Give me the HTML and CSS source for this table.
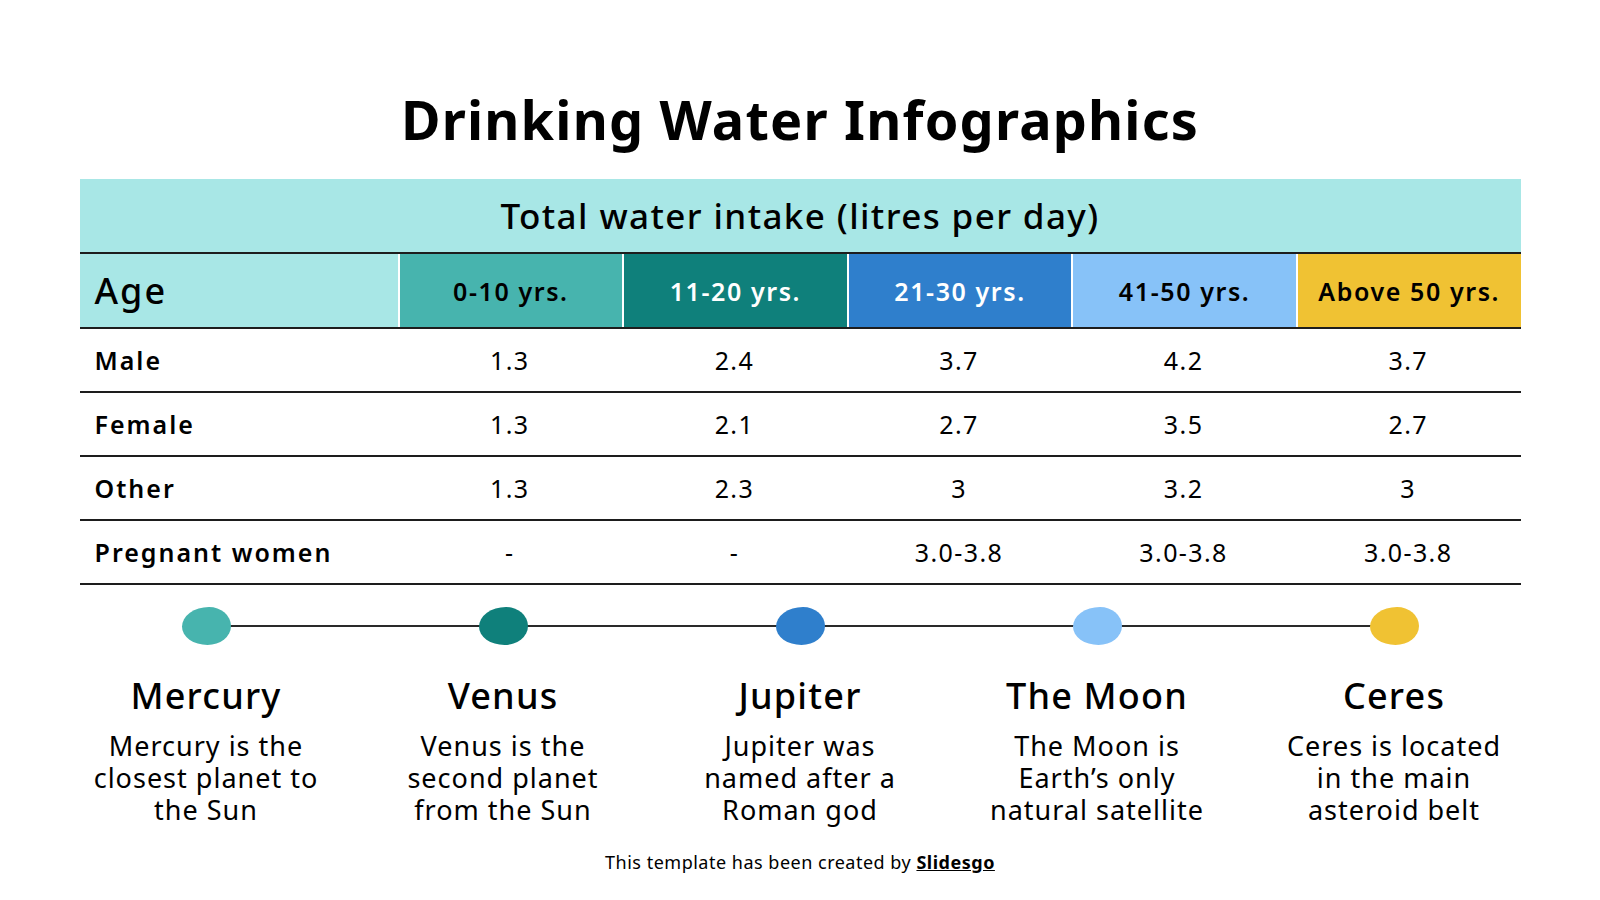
FILE: index.html
```html
<!DOCTYPE html>
<html lang="en">
<head>
<meta charset="utf-8">
<title>Drinking Water Infographics</title>
<link rel="stylesheet" href="styles.css">
</head>
<body>
<div class="slide">
  <h1 class="title">Drinking Water Infographics</h1>

  <div class="table">
    <div class="band">Total water intake (litres per day)</div>
    <div class="grid head">
      <div class="cell label age">Age</div>
      <div class="cell c1">0-10 yrs.</div>
      <div class="cell c2">11-20 yrs.</div>
      <div class="cell c3">21-30 yrs.</div>
      <div class="cell c4">41-50 yrs.</div>
      <div class="cell c5">Above 50 yrs.</div>
    </div>
    <div class="grid row">
      <div class="cell label">Male</div>
      <div class="cell">1.3</div><div class="cell">2.4</div><div class="cell">3.7</div><div class="cell">4.2</div><div class="cell">3.7</div>
    </div>
    <div class="grid row">
      <div class="cell label">Female</div>
      <div class="cell">1.3</div><div class="cell">2.1</div><div class="cell">2.7</div><div class="cell">3.5</div><div class="cell">2.7</div>
    </div>
    <div class="grid row">
      <div class="cell label">Other</div>
      <div class="cell">1.3</div><div class="cell">2.3</div><div class="cell">3</div><div class="cell">3.2</div><div class="cell">3</div>
    </div>
    <div class="grid row">
      <div class="cell label">Pregnant women</div>
      <div class="cell">-</div><div class="cell">-</div><div class="cell">3.0-3.8</div><div class="cell">3.0-3.8</div><div class="cell">3.0-3.8</div>
    </div>
  </div>

  <div class="timeline">
    <div class="item">
      <span class="dot d1"></span>
      <h2 class="name">Mercury</h2>
      <p class="desc">Mercury is the<br>closest planet to<br>the Sun</p>
    </div>
    <div class="item">
      <span class="dot d2"></span>
      <h2 class="name">Venus</h2>
      <p class="desc">Venus is the<br>second planet<br>from the Sun</p>
    </div>
    <div class="item">
      <span class="dot d3"></span>
      <h2 class="name">Jupiter</h2>
      <p class="desc">Jupiter was<br>named after a<br>Roman god</p>
    </div>
    <div class="item">
      <span class="dot d4"></span>
      <h2 class="name">The Moon</h2>
      <p class="desc">The Moon is<br>Earth’s only<br>natural satellite</p>
    </div>
    <div class="item">
      <span class="dot d5"></span>
      <h2 class="name">Ceres</h2>
      <p class="desc">Ceres is located<br>in the main<br>asteroid belt</p>
    </div>
  </div>

  <p class="credit">This template has been created by <a class="brand" href="#">Slidesgo</a></p>
</div>
</body>
</html>
```

FILE: styles.css
```css
* { box-sizing: border-box; }
html, body { margin: 0; padding: 0; background: #fff; }
body { font-family: "Noto Sans", "Open Sans", sans-serif; color: #000; }

.slide {
  width: 1600px;
  height: 900px;
  display: flex;
  flex-direction: column;
  align-items: center;
  overflow: hidden;
}

.title {
  margin: 86px 0 0;
  font-size: 54px;
  line-height: 66px;
  font-weight: 700;
  letter-spacing: 1.2px;
}

.table {
  width: 1441px;
  margin-top: 27px;
}

.band {
  height: 75px;
  background: #a8e7e6;
  display: flex;
  align-items: center;
  justify-content: center;
  font-size: 35px;
  font-weight: 500;
  letter-spacing: 1.4px;
  border-bottom: 2px solid #1d1d1d;
}

.grid {
  display: grid;
  grid-template-columns: 318px repeat(5, 1fr);
  border-bottom: 2px solid #1d1d1d;
}

.head { height: 75px; }
.row { height: 64px; }

.cell {
  display: flex;
  align-items: center;
  justify-content: center;
  font-size: 25px;
  letter-spacing: 1.4px;
}

.head .cell {
  font-weight: 600;
  letter-spacing: 1.6px;
  border-left: 2px solid #fff;
}
.head .cell.age { border-left: 0; }

.label {
  justify-content: flex-start;
  padding-left: 15px;
  font-weight: 600;
  letter-spacing: 2px;
}

.head .age {
  background: #a8e7e6;
  font-size: 36px;
  font-weight: 500;
  letter-spacing: 2px;
}

.c1 { background: #47b4ae; }
.c2 { background: #0f807b; color: #fff; }
.c3 { background: #2f7fcc; color: #fff; }
.c4 { background: #87c2f8; }
.c5 { background: #f0c233; }

.timeline {
  position: relative;
  width: 1485px;
  display: grid;
  grid-template-columns: repeat(5, 1fr);
  margin-top: 22px;
}
.timeline::before {
  content: "";
  position: absolute;
  left: 148px;
  right: 148px;
  top: 18px;
  height: 2px;
  background: #2a2a2a;
}

.item {
  display: flex;
  flex-direction: column;
  align-items: center;
  text-align: center;
}

.dot {
  position: relative;
  width: 49px;
  height: 38px;
  border-radius: 55% 45% 48% 52% / 52% 50% 50% 48%;
}
.d1 { background: #47b4ae; }
.d2 { background: #0f807b; }
.d3 { background: #2f7fcc; }
.d4 { background: #87c2f8; }
.d5 { background: #f0c233; }

.name {
  margin: 29px 0 0;
  font-size: 36px;
  line-height: 44px;
  font-weight: 500;
  letter-spacing: 1.2px;
}

.desc {
  margin: 12px 0 0;
  font-size: 27px;
  line-height: 32px;
  font-weight: 400;
  letter-spacing: 1px;
}

.credit {
  margin: 25px 0 0;
  font-size: 18px;
  line-height: 22px;
  letter-spacing: 0.5px;
}
.brand {
  color: #000;
  font-weight: 700;
  text-decoration: underline;
}
```
